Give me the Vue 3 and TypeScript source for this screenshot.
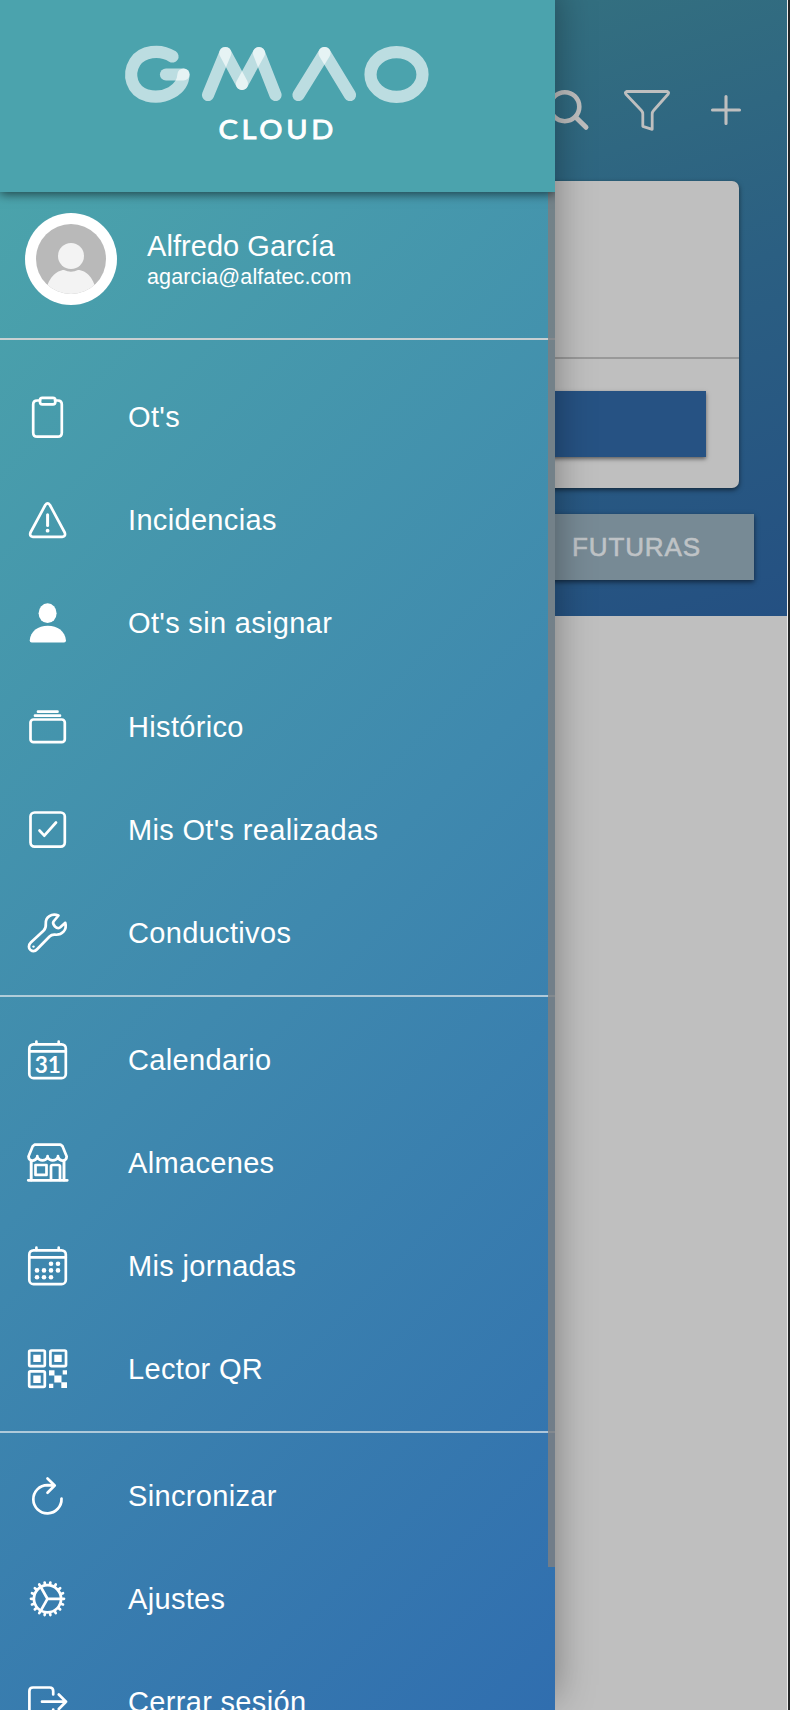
<script setup lang="ts">
type Item = { icon: string; label: string }

const groups: Item[][] = [
  [
    { icon: 'clipboard', label: "Ot's" },
    { icon: 'warning', label: 'Incidencias' },
    { icon: 'person', label: "Ot's sin asignar" },
    { icon: 'albums', label: 'Histórico' },
    { icon: 'check', label: "Mis Ot's realizadas" },
    { icon: 'wrench', label: 'Conductivos' },
  ],
  [
    { icon: 'calendar', label: 'Calendario' },
    { icon: 'store', label: 'Almacenes' },
    { icon: 'schedule', label: 'Mis jornadas' },
    { icon: 'qr', label: 'Lector QR' },
  ],
  [
    { icon: 'refresh', label: 'Sincronizar' },
    { icon: 'gear', label: 'Ajustes' },
    { icon: 'logout', label: 'Cerrar sesión' },
  ],
]

const dots: [number, number][] = [
  [27, 20.7], [34, 20.7],
  [13, 27.4], [20, 27.4], [27, 27.4], [34, 27.4],
  [13, 34.3], [20, 34.3], [27, 34.3],
]

const teeth = Array.from({ length: 18 }, (_, i) => i * 20 + 10)
</script>

<template>
  <div class="screen">
    <main class="page">
      <section class="hero">
        <div class="toolbar">
          <svg class="tool search" viewBox="0 0 46 46">
            <circle cx="20.800" cy="19.700" r="14.5" stroke-width="4.6" />
            <path d="M31.500 30L42 40.300" stroke-width="5" />
          </svg>
          <svg class="tool funnel" viewBox="0 0 48 46">
            <path d="M3.5 4.5H44.5Q46.500 5.300 45 7.300L30.600 23.500Q29.200 25 29.200 27V42.300L19.800 39.300V27Q19.800 25 18.400 23.500L3 7.300Q1.500 5.300 3.500 4.500Z" stroke-width="2.800" />
          </svg>
          <svg class="tool plus" viewBox="0 0 32 32">
            <path d="M16 2.500V29.500M2.500 16H29.500" stroke-width="3.100" />
          </svg>
        </div>
        <div class="card">
          <div class="card-body"></div>
          <div class="card-foot"><div class="card-button"></div></div>
        </div>
        <div class="tabs"><span>FUTURAS</span></div>
      </section>
    </main>
    <div class="edge"></div>

    <aside class="drawer">
      <header class="brand">
        <svg viewBox="0 0 555 192">
          <g class="mark">
            <path d="M172.500 56.500C160 48.500 142 51 135 62C127 75 132 91 147 95.500C164 100 183 90 183.500 74.500" />
            <path d="M166 74.500H183.500" />
            <path d="M208 95L225.300 53" />
            <path d="M225.300 53L242 84" />
            <path d="M242 84L259 53" />
            <path d="M259 53L275.500 95" />
            <path d="M298.500 95L324.500 53" />
            <path d="M324.500 53L350 95" />
            <ellipse cx="396.500" cy="74.500" rx="26" ry="22.300" />
          </g>
          <text x="218.500" y="138.900" textLength="118.500" lengthAdjust="spacingAndGlyphs" class="cloud">CLOUD</text>
        </svg>
      </header>

      <div class="scroll">
        <div class="profile">
          <svg class="avatar" viewBox="0 0 92 92">
            <defs><clipPath id="face"><circle cx="46" cy="46" r="35" /></clipPath></defs>
            <circle cx="46" cy="46" r="46" fill="#fff" />
            <g clip-path="url(#face)">
              <rect width="92" height="92" fill="#b9b9b9" />
              <circle cx="46" cy="43" r="13" fill="#f3f3f3" />
              <path d="M21 82C21 66 32 57 39 57Q46 60.500 53 57C61 57 71 66 71 82Z" fill="#f3f3f3" />
            </g>
          </svg>
          <div class="who">
            <div class="name">Alfredo García</div>
            <div class="mail">agarcia@alfatec.com</div>
          </div>
        </div>

        <nav>
          <ul v-for="(group, g) in groups" :key="g" class="group">
            <li v-for="item in group" :key="item.label" class="item">
              <svg class="icon" viewBox="0 0 46 46">
                <g v-if="item.icon === 'clipboard'">
                  <path d="M16 6.500H13.200Q9.200 6.500 9.200 10.500V38.700Q9.200 42.700 13.200 42.700H33.800Q37.800 42.700 37.800 38.700V10.500Q37.800 6.500 33.800 6.500H31" />
                  <rect x="16" y="3.800" width="15.300" height="6.500" rx="2.300" />
                </g>
                <g v-else-if="item.icon === 'warning'">
                  <path d="M21.300 8Q23.600 4.800 25.900 8L40.700 35.500Q42 39.600 38.300 39.800H8.900Q5.200 39.600 6.500 35.500Z" />
                  <path d="M23.600 17.800V28.500" stroke-width="3" />
                  <circle cx="23.600" cy="33.700" r="1.900" class="solid" />
                </g>
                <g v-else-if="item.icon === 'person'" class="solid">
                  <ellipse cx="23.600" cy="13.200" rx="9" ry="9.900" />
                  <path d="M5.700 40.500C6.500 31 14 25.800 23.800 25.800S41 31 42 40.500Q42 42.500 40 42.500H7.700Q5.700 42.500 5.700 40.500Z" />
                </g>
                <g v-else-if="item.icon === 'albums'">
                  <rect x="6.500" y="15.500" width="34.300" height="22.700" rx="3" />
                  <path d="M14 7.700H33.500M11 11.700H36" />
                </g>
                <g v-else-if="item.icon === 'check'">
                  <rect x="6.500" y="5.500" width="34.300" height="34.100" rx="4" />
                  <path d="M15.500 23.500L20.300 28.700L32 15.500" />
                </g>
                <g v-else-if="item.icon === 'wrench'">
                  <path d="M34.500 5.500C27.500 3 21.500 7 21.800 13.500C22.100 17.500 21.500 19 19.500 20.700L6.800 32.500C4.200 35 4.500 38.500 6.500 40C8.700 41.700 11.300 41.300 13.300 39L25.300 26.700C27 25 28.500 24.500 31 24.700C38 25.300 43.300 20 41.300 12.800L36 17.500C34.500 18.500 32.800 18.300 31 16.500C29.200 14.500 28.500 13 29.500 11.500Z" />
                  <circle cx="9.500" cy="36.600" r="1.200" class="solid" />
                </g>
                <g v-else-if="item.icon === 'calendar' || item.icon === 'schedule'">
                  <rect x="5.300" y="7.300" width="36.500" height="33.800" rx="4.200" />
                  <path d="M5.300 14.400H41.800M12.400 4.700V7M34.700 4.700V7" />
                  <text v-if="item.icon === 'calendar'" x="23.700" y="35.500" class="day">31</text>
                  <g v-else class="solid">
                    <circle v-for="(d, i) in dots" :key="i" :cx="d[0]" :cy="d[1]" r="2.300" />
                  </g>
                </g>
                <g v-else-if="item.icon === 'store'">
                  <path d="M10.500 4.700H36.500L38.500 6.200L42.700 16.500C42.500 21.500 36.500 22 34 17.500C31.500 21.300 26 21.300 23.600 17.500C21.200 21.300 15.800 21.300 13.300 17.500C10.500 22 4.800 21.500 4.500 16.500L8.700 6.200Z" />
                  <path d="M13.300 16V18M23.600 16V18M34 16V18M4.200 40.300H43.300" />
                  <path d="M7.200 21V40M40 21V40" stroke-width="2.900" />
                  <rect x="11.500" y="25" width="11" height="9.900" />
                  <path d="M27 40V26.500Q27 25 28.500 25H34.500Q36 25 36 26.500V40" />
                </g>
                <g v-else-if="item.icon === 'qr'">
                  <rect x="5.200" y="4.500" width="15.600" height="15.600" rx="1.300" />
                  <rect x="26.400" y="4.500" width="15.600" height="15.600" rx="1.300" />
                  <rect x="5.200" y="25.300" width="15.600" height="15.600" rx="1.300" />
                  <path class="solid" d="M9.300 8.700h7.400v7.300h-7.400zM30.300 8.700h7.400v7.300h-7.400zM9.300 29.600h7.400v7.300h-7.400zM25 24.200h5.500v5.300H25zM38.700 24.200H43v4.300h-4.300zM30.300 29.500h7.200v7h-7.200zM25 37.700h4.300V42H25zM37.300 36.300H43V42h-5.700z" />
                </g>
                <g v-else-if="item.icon === 'refresh'">
                  <path d="M37.500 25.500A14.100 14.100 0 1 1 23.400 12.100L30.500 12.300M23.500 5.500L30.700 12.500L23.500 19.800" />
                </g>
                <g v-else-if="item.icon === 'gear'">
                  <circle cx="23.500" cy="22.800" r="13.600" />
                  <path v-for="a in teeth" :key="a" d="M23.500 8.500V6.300" :transform="`rotate(${a} 23.500 22.800)`" />
                  <path d="M24.500 22.800H37M23 22L16.800 11M23 23.600L16.800 34.600" />
                </g>
                <g v-else>
                  <path d="M29.200 15.500V12Q29.200 8.500 25.700 8.500H9Q5.400 8.500 5.400 12V34Q5.400 37.500 9 37.500H25.700Q29.200 37.500 29.200 34V30.500M18 22.700H42M34.800 15.500L42 22.700L34.800 30" />
                </g>
              </svg>
              <span>{{ item.label }}</span>
            </li>
          </ul>
        </nav>
        <div class="thumb"></div>
      </div>
    </aside>
  </div>
</template>

<style>
body {
  background: #bfbfbf;
  overflow: hidden;
}
</style>

<style scoped>
.screen {
  position: relative;
  display: flex;
  width: 790px;
  height: 1710px;
  overflow: hidden;
  font-family: "Liberation Sans", Arial, sans-serif;
}
.page {
  width: 787px;
  background: #bfbfbf;
}
.edge {
  box-sizing: border-box;
  width: 3px;
  border-left: 1px solid #eee;
  background: #252728;
}
.hero {
  display: flow-root;
  height: 616px;
  background: linear-gradient(162deg, #3a7c80 0%, #336f80 22%, #2b5f82 58%, #245082 100%);
}
.toolbar {
  display: flex;
  justify-content: flex-end;
  align-items: center;
  height: 46px;
  margin: 87px 45px 0 0;
}
.tool {
  fill: none;
  stroke: #bfbfbf;
  stroke-linecap: round;
  stroke-linejoin: round;
}
.search {
  width: 46px;
  height: 46px;
  margin-right: 33px;
}
.funnel {
  width: 48px;
  height: 46px;
  margin-right: 39px;
}
.plus {
  width: 32px;
  height: 32px;
}
.card {
  margin: 47.500px 48px 0 47px;
  height: 307px;
  border-radius: 7px;
  background: #bfbfbf;
  box-shadow: 0 2px 5px rgba(0, 0, 0, 0.55);
}
.card-body {
  height: 176px;
  border-bottom: 2px solid #999;
}
.card-foot {
  padding: 32px 33px 0;
}
.card-button {
  height: 66px;
  background: #265283;
  box-shadow: 0 2px 4px rgba(0, 0, 0, 0.5);
}
.tabs {
  display: flex;
  align-items: center;
  justify-content: flex-end;
  height: 66px;
  margin: 26px 33px 0;
  background: #778a95;
  box-shadow: 0 2px 5px rgba(0, 0, 0, 0.55);
}
.tabs span {
  padding: 1px 53px 0 0;
  font-size: 26px;
  letter-spacing: 0.900px;
  color: #bfc3c6;
  -webkit-text-stroke: 0.600px #bfc3c6;
}
.drawer {
  position: absolute;
  inset: 0 auto 0 0;
  display: flex;
  flex-direction: column;
  width: 555px;
  box-shadow: 0 -12px 36px rgba(0, 0, 0, 0.36);
  color: #fff;
}
.brand {
  z-index: 1;
  height: 192px;
  background: #4ba3ad;
  box-shadow: 0 2px 10px rgba(0, 0, 0, 0.6);
  clip-path: inset(0 0 -20px 0);
}
.brand svg {
  display: block;
  width: 555px;
  height: 192px;
}
.mark {
  fill: none;
  stroke: #fff;
  stroke-opacity: 0.63;
  stroke-width: 12.200;
  stroke-linecap: round;
  stroke-linejoin: round;
}
.cloud {
  font: 400 27.500px Lato, sans-serif;
  letter-spacing: 3.500px;
  fill: #fff;
  stroke: #fff;
  stroke-width: 0.900;
}
.scroll {
  position: relative;
  height: 1518px;
  overflow: hidden;
  background: linear-gradient(135deg, #4ba3ab 0%, #3f89ae 50%, #306eaf 100%);
}
.profile {
  display: flex;
  height: 146px;
  border-bottom: 2px solid rgba(214, 214, 214, 0.9);
}
.avatar {
  width: 92px;
  height: 92px;
  margin: 21px 30px 0 25px;
}
.who {
  padding-top: 37px;
}
.name {
  font-size: 29px;
  line-height: 34px;
  letter-spacing: 0.050px;
}
.mail {
  font-size: 21.500px;
  line-height: 29px;
  letter-spacing: 0.120px;
}
.group {
  margin: 0;
  padding: 11.500px 0 10px;
  list-style: none;
}
.group:first-child {
  padding-top: 25.500px;
}
.group + .group {
  border-top: 2px solid rgba(214, 226, 232, 0.75);
}
.item {
  display: flex;
  align-items: center;
  height: 103.200px;
  font-size: 29px;
  letter-spacing: 0.330px;
}
.item span {
  padding-top: 1px;
}
.icon {
  flex: none;
  width: 46px;
  height: 46px;
  margin: 0 58px 0 24px;
  fill: none;
  stroke: #fff;
  stroke-width: 2.700;
  stroke-linecap: round;
  stroke-linejoin: round;
}
.solid {
  fill: #fff;
  stroke: none;
}
.day {
  font: 700 22.500px Lato, sans-serif;
  letter-spacing: 0;
  text-anchor: middle;
  fill: #fff;
  stroke: none;
}
.thumb {
  position: absolute;
  top: 0;
  right: 0;
  width: 7px;
  height: 1375px;
  background: rgba(123, 127, 130, 0.86);
}
</style>
